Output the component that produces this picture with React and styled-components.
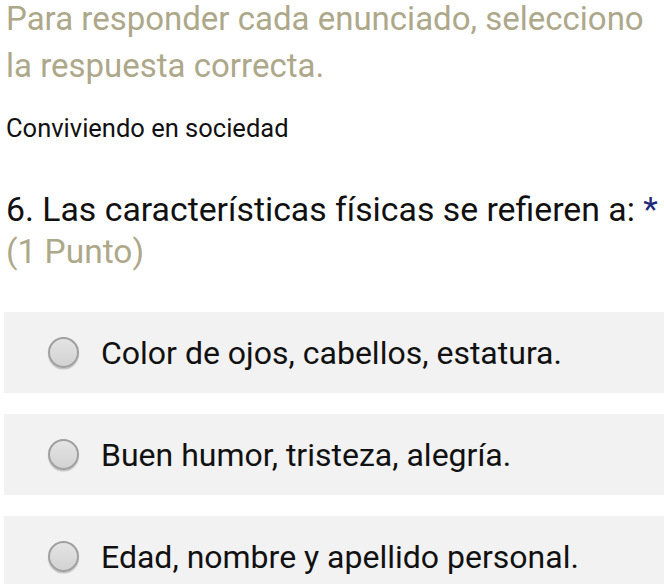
import React from 'react';
import styled, { createGlobalStyle } from 'styled-components';

const GlobalStyle = createGlobalStyle`
  html, body {
    margin: 0;
    padding: 0;
    background: #ffffff;
  }
  body {
    font-family: Roboto, "Noto Sans", "Liberation Sans", sans-serif;
    color: #111;
  }
`;

const options = [
  'Color de ojos, cabellos, estatura.',
  'Buen humor, tristeza, alegría.',
  'Edad, nombre y apellido personal.',
];

const App = () => {
  return (
    <Page>
      <GlobalStyle />
      <Header>
        <Intro>Para responder cada enunciado, selecciono la respuesta correcta.</Intro>
        <Section>Conviviendo en sociedad</Section>
      </Header>
      <Question>
        <Title>
          6. Las características físicas se refieren a: <Required>*</Required>
        </Title>
        <Points>(1 Punto)</Points>
      </Question>
      <Options>
        {options.map((text) => (
          <Option key={text}>
            <Radio />
            <Label>{text}</Label>
          </Option>
        ))}
      </Options>
    </Page>
  );
};

export default App;

const Page = styled.div`
  width: 664px;
  height: 584px;
  overflow: hidden;
  padding-left: 4px;
  box-sizing: border-box;
`;

const Header = styled.div`
  padding-left: 2px;
`;

const Intro = styled.h1`
  margin: -5px 0 0;
  font-size: 33px;
  font-weight: 400;
  line-height: 47px;
  color: #aea88b;
`;

const Section = styled.div`
  margin-top: 24px;
  font-size: 25.5px;
  line-height: 30px;
  color: #111;
`;

const Question = styled.div`
  margin-top: 46px;
  padding-left: 2px;
`;

const Title = styled.div`
  font-size: 33.8px;
  line-height: 42px;
  color: #111;
  white-space: nowrap;
`;

const Required = styled.span`
  color: #1f2a7a;
`;

const Points = styled.div`
  font-size: 33.5px;
  line-height: 42px;
  color: #aea88b;
`;

const Options = styled.div`
  margin-top: 39px;
  display: flex;
  flex-direction: column;
  gap: 21px;
`;

const Option = styled.div`
  height: 81px;
  background: #f2f2f2;
  display: flex;
  align-items: center;
  padding-left: 44px;
`;

const Radio = styled.span`
  box-sizing: border-box;
  width: 31px;
  height: 31px;
  border-radius: 50%;
  border: 2px solid #a0a0a0;
  background: linear-gradient(#e4e4e4, #d2d2d2);
  box-shadow: 0 1.5px 1px rgba(0, 0, 0, 0.2);
  flex-shrink: 0;
`;

const Label = styled.span`
  margin-left: 22px;
  font-size: 32px;
  color: #111;
  white-space: nowrap;
`;
